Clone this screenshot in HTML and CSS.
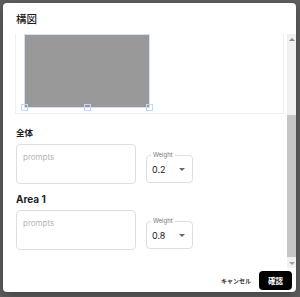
FILE: index.html
```html
<!DOCTYPE html>
<html lang="ja">
	<head>
		<meta charset="UTF-8">
		<title>構図</title>
		<link rel="stylesheet" href="styles.css">
	</head>
	<body>
		<div class="dialog">
			<div class="dialogTitle">構図</div>
			<div class="dialogBody">
				<div class="scrollView">
					<div class="canvasPanel">
						<div class="canvasRect">
							<span class="handle hLeft"></span>
							<span class="handle hMid"></span>
							<span class="handle hRight"></span>
						</div>
					</div>
					<div class="section">
						<div class="sectionLabel jp">全体</div>
						<div class="promptRow">
							<div class="promptBox">prompts</div>
							<div class="weightSelect">
								<span class="weightLabel">Weight</span>
								<span class="weightValue">0.2</span>
								<span class="caret"></span>
							</div>
						</div>
					</div>
					<div class="section">
						<div class="sectionLabel">Area 1</div>
						<div class="promptRow">
							<div class="promptBox">prompts</div>
							<div class="weightSelect">
								<span class="weightLabel">Weight</span>
								<span class="weightValue">0.8</span>
								<span class="caret"></span>
							</div>
						</div>
					</div>
				</div>
				<div class="scrollbar">
					<div class="sbButton"><span class="sbUp"></span></div>
					<div class="sbThumb"></div>
					<div class="sbButton sbBottom"><span class="sbDown"></span></div>
				</div>
			</div>
			<div class="dialogActions">
				<span class="cancelButton">キャンセル</span>
				<span class="okButton">確認</span>
			</div>
		</div>
	</body>
</html>
```

FILE: styles.css
```css
body {
	margin: 0;
	width: 300px;
	height: 297px;
	overflow: hidden;
	background-color: #5f5f5f;
	font-family: Inter, "Noto Sans CJK JP", sans-serif;
	color: #1f1f1f;
}
.dialog {
	margin: 3px 0 0 3px;
	width: 293px;
	height: 289px;
	background-color: #fff;
	border-radius: 4px;
	display: flex;
	flex-direction: column;
	overflow: hidden;
	box-shadow: 0 4px 12px rgba(0, 0, 0, 0.3);
}
.dialogTitle {
	height: 31px;
	padding-left: 13px;
	display: flex;
	align-items: center;
	font-size: 10.5px;
	font-weight: 500;
	font-family: "Noto Sans CJK JP", sans-serif;
}
.dialogBody {
	height: 234px;
	display: flex;
}
.scrollView {
	flex: 1;
	overflow: hidden;
	padding: 0 3px 0 12px;
}
.canvasPanel {
	border: 1px solid #efefef;
	border-top: none;
	padding: 0 0 5px 8px;
}
.canvasRect {
	position: relative;
	width: 124px;
	height: 72px;
	background-color: #999;
	border: 1px solid #d3def8;
}
.handle {
	position: absolute;
	bottom: -4px;
	width: 5px;
	height: 5px;
	border: 1px solid #c6d6f7;
}
.hLeft {
	left: -4px;
}
.hMid {
	left: 59px;
}
.hRight {
	right: -4px;
}
.section {
	padding-left: 1px;
}
.sectionLabel {
	margin-top: 11px;
	height: 14px;
	line-height: 14px;
	margin-bottom: 5px;
	font-size: 10px;
	font-weight: 700;
}
.sectionLabel.jp {
	font-size: 8.5px;
	font-family: "Noto Sans CJK JP", sans-serif;
}
.section + .section .sectionLabel {
	margin-top: 8px;
	margin-bottom: 4px;
}
.promptRow {
	display: flex;
	align-items: flex-end;
	gap: 10px;
}
.promptBox {
	box-sizing: border-box;
	width: 120px;
	height: 40px;
	border: 1px solid #dedede;
	border-radius: 4px;
	padding: 7px 0 0 6px;
	font-size: 8px;
	color: #b5b5b5;
}
.weightSelect {
	position: relative;
	box-sizing: border-box;
	width: 47px;
	height: 28px;
	margin-bottom: 1px;
	border: 1px solid #dedede;
	border-radius: 4px;
	display: flex;
	align-items: center;
	padding: 0 7px 0 5px;
}
.weightLabel {
	position: absolute;
	top: -5px;
	left: 4px;
	padding: 0 2px;
	background-color: #fff;
	font-size: 6px;
	line-height: 8px;
	color: #777;
}
.weightValue {
	flex: 1;
	font-size: 9px;
	color: #222;
}
.caret {
	width: 0;
	height: 0;
	border-left: 3px solid transparent;
	border-right: 3px solid transparent;
	border-top: 3px solid #666;
}
.scrollbar {
	width: 9px;
	background-color: #f1f1f1;
	display: flex;
	flex-direction: column;
}
.sbButton {
	height: 10px;
	display: flex;
	align-items: center;
	justify-content: center;
}
.sbBottom {
	margin-top: auto;
}
.sbUp {
	border-left: 3px solid transparent;
	border-right: 3px solid transparent;
	border-bottom: 3px solid #8a8a8a;
}
.sbDown {
	border-left: 3px solid transparent;
	border-right: 3px solid transparent;
	border-top: 3px solid #a0a0a0;
}
.sbThumb {
	margin-top: 71px;
	height: 142px;
	background-color: #c6c6c6;
}
.dialogActions {
	height: 24px;
	display: flex;
	justify-content: flex-end;
	align-items: center;
	gap: 8px;
	padding-right: 4px;
	font-family: "Noto Sans CJK JP", sans-serif;
}
.cancelButton {
	font-size: 6px;
	font-weight: 700;
	color: #333;
}
.okButton {
	height: 19px;
	line-height: 19px;
	padding: 0 9px;
	background-color: #000;
	color: #fff;
	border-radius: 4px;
	font-size: 7.5px;
	font-weight: 700;
}
```
